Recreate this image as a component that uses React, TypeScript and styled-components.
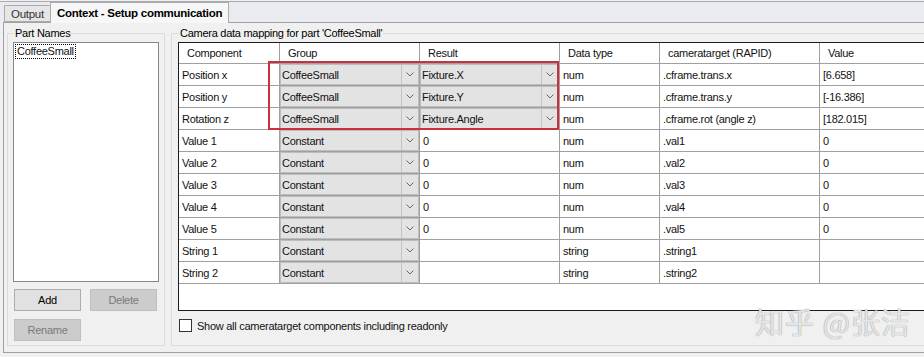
import React from "react";
import styled, { createGlobalStyle } from "styled-components";

const GlobalStyle = createGlobalStyle`
  html, body {
    margin: 0;
    padding: 0;
    background: #f0f0f0;
  }
  body {
    font-family: "Liberation Sans", Arial, sans-serif;
    font-size: 11px;
    letter-spacing: -0.27px;
    color: #111;
  }
`;

const Window = styled.div`
  position: relative;
  width: 924px;
  height: 357px;
  overflow: hidden;
  padding-top: 1px;
  box-sizing: border-box;
  display: flex;
  flex-direction: column;
`;

const TabStrip = styled.div`
  height: 20px;
  border-top: 1px solid #a8aab0;
  background: #e9ebf1;
  display: flex;
  align-items: flex-end;
  padding-left: 4px;
`;

const Tab = styled.div<{ $active?: boolean }>`
  position: relative;
  z-index: ${(p) => (p.$active ? 1 : 0)};
  box-sizing: border-box;
  height: ${(p) => (p.$active ? "21px" : "17px")};
  margin-bottom: ${(p) => (p.$active ? "-1px" : "0")};
  margin-left: ${(p) => (p.$active ? "-1px" : "0")};
  padding: 0 6px;
  display: flex;
  align-items: center;
  border: 1px solid #acacac;
  border-bottom: ${(p) => (p.$active ? "none" : "1px solid #acacac")};
  background: ${(p) => (p.$active ? "#f7f7f7" : "#e6e6e6")};
  font-weight: ${(p) => (p.$active ? "bold" : "normal")};
  font-size: 11.5px;
  color: ${(p) => (p.$active ? "#000" : "#333")};
`;

const Panel = styled.div`
  margin-left: 3px;
  height: 331px;
  box-sizing: border-box;
  border: 1px solid #a0a0a0;
  border-right: none;
  padding: 3px 0 6px 3px;
  display: flex;
  gap: 6px;
  align-items: stretch;
`;

const GroupBox = styled.fieldset<{ $width: number; $pad: number }>`
  flex: none;
  width: ${(p) => p.$width}px;
  box-sizing: border-box;
  margin: 0;
  padding: 0 ${(p) => p.$pad}px;
  border: 1px solid #dcdcdc;
  min-width: 0;
  display: flex;
  flex-direction: column;
`;

const Legend = styled.legend`
  padding: 0 1px;
  margin-left: 1px;
  line-height: 14px;
  color: #000;
`;

const ListBox = styled.div`
  margin-top: 2px;
  height: 240px;
  box-sizing: border-box;
  background: #fff;
  border: 1px solid #828790;
  padding: 1px;
`;

const ListItem = styled.div`
  display: inline-block;
  border: 1px dotted #000;
  padding: 0 1px;
  line-height: 13px;
`;

const ButtonRow = styled.div<{ $top: number }>`
  display: flex;
  gap: 9px;
  margin-top: ${(p) => p.$top}px;
  padding-left: 1px;
`;

const Button = styled.div<{ $disabled?: boolean }>`
  box-sizing: border-box;
  width: 67px;
  height: 22px;
  display: flex;
  align-items: center;
  justify-content: center;
  background: ${(p) => (p.$disabled ? "#cccccc" : "#e1e1e1")};
  border: 1px solid ${(p) => (p.$disabled ? "#bfbfbf" : "#adadad")};
  color: ${(p) => (p.$disabled ? "#7a7a7a" : "#000")};
`;

const Grid = styled.div`
  position: relative;
  margin-top: 2px;
  height: 269px;
  box-sizing: border-box;
  border: 1px solid #1c1c1c;
  background: #fff;
  overflow: hidden;
`;

const Row = styled.div<{ $header?: boolean }>`
  display: grid;
  grid-template-columns: 101px 140px 140px 100px 160px 160px;
  height: ${(p) => (p.$header ? "21px" : "22px")};
  box-sizing: border-box;
  border-bottom: 1px solid #a0a0a0;
`;

const Cell = styled.div<{ $header?: boolean }>`
  box-sizing: border-box;
  border-right: 1px solid #a0a0a0;
  padding-left: ${(p) => (p.$header ? "8px" : "3px")};
  display: flex;
  align-items: center;
  white-space: nowrap;
  overflow: hidden;
`;

const ComboCell = styled.div`
  box-sizing: border-box;
  border-right: 1px solid #a0a0a0;
  display: flex;
  align-items: stretch;
`;

const Combo = styled.div`
  flex: 1;
  display: flex;
  align-items: stretch;
  background: #e3e3e3;
  border: 1px solid #bdbdbd;
`;

const ComboText = styled.div`
  flex: 1;
  display: flex;
  align-items: center;
  padding-left: 1px;
  white-space: nowrap;
`;

const ComboArrow = styled.div`
  width: 16px;
  border-left: 1px solid #c4c4c4;
  display: flex;
  align-items: center;
  justify-content: center;
`;

const Highlight = styled.div`
  position: absolute;
  left: 89px;
  top: 18px;
  width: 291px;
  height: 69px;
  box-sizing: border-box;
  border: 2px solid #c9313c;
  pointer-events: none;
`;

const CheckRow = styled.div`
  margin-top: 8px;
  padding-left: 1px;
  display: flex;
  align-items: center;
  gap: 5px;
`;

const CheckBox = styled.div`
  width: 13px;
  height: 13px;
  box-sizing: border-box;
  border: 1px solid #333;
  background: #fff;
`;

const Watermark = styled.div`
  position: absolute;
  left: 755px;
  top: 300px;
  font-family: "Noto Sans CJK SC", sans-serif;
  font-size: 29px;
  letter-spacing: 1px;
  color: rgba(250, 250, 252, 0.85);
  text-shadow: 0 0 1px rgba(90, 90, 90, 0.9);
  white-space: nowrap;
`;

type RowData = {
  comp: string;
  group: string;
  result: string;
  resultCombo: boolean;
  dtype: string;
  target: string;
  value: string;
};

const rows: RowData[] = [
  { comp: "Position x", group: "CoffeeSmall", result: "Fixture.X", resultCombo: true, dtype: "num", target: ".cframe.trans.x", value: "[6.658]" },
  { comp: "Position y", group: "CoffeeSmall", result: "Fixture.Y", resultCombo: true, dtype: "num", target: ".cframe.trans.y", value: "[-16.386]" },
  { comp: "Rotation z", group: "CoffeeSmall", result: "Fixture.Angle", resultCombo: true, dtype: "num", target: ".cframe.rot (angle z)", value: "[182.015]" },
  { comp: "Value 1", group: "Constant", result: "0", resultCombo: false, dtype: "num", target: ".val1", value: "0" },
  { comp: "Value 2", group: "Constant", result: "0", resultCombo: false, dtype: "num", target: ".val2", value: "0" },
  { comp: "Value 3", group: "Constant", result: "0", resultCombo: false, dtype: "num", target: ".val3", value: "0" },
  { comp: "Value 4", group: "Constant", result: "0", resultCombo: false, dtype: "num", target: ".val4", value: "0" },
  { comp: "Value 5", group: "Constant", result: "0", resultCombo: false, dtype: "num", target: ".val5", value: "0" },
  { comp: "String 1", group: "Constant", result: "", resultCombo: false, dtype: "string", target: ".string1", value: "" },
  { comp: "String 2", group: "Constant", result: "", resultCombo: false, dtype: "string", target: ".string2", value: "" },
];

const Chevron = () => (
  <svg width="8" height="5" viewBox="0 0 8 5">
    <polyline points="0.5,0.5 4,4 7.5,0.5" fill="none" stroke="#6a6a6a" strokeWidth="1" />
  </svg>
);

const ComboBox: React.FC<{ text: string }> = ({ text }) => (
  <ComboCell>
    <Combo>
      <ComboText>{text}</ComboText>
      <ComboArrow>
        <Chevron />
      </ComboArrow>
    </Combo>
  </ComboCell>
);

const App: React.FC = () => {
  return (
    <Window>
      <GlobalStyle />
      <TabStrip>
        <Tab>Output</Tab>
        <Tab $active>Context - Setup communication</Tab>
      </TabStrip>
      <Panel>
        <GroupBox $width={158} $pad={5}>
          <Legend>Part Names</Legend>
          <ListBox>
            <ListItem>CoffeeSmall</ListItem>
          </ListBox>
          <ButtonRow $top={7}>
            <Button>Add</Button>
            <Button $disabled>Delete</Button>
          </ButtonRow>
          <ButtonRow $top={8}>
            <Button $disabled>Rename</Button>
          </ButtonRow>
        </GroupBox>
        <GroupBox $width={820} $pad={6}>
          <Legend>Camera data mapping for part 'CoffeeSmall'</Legend>
          <Grid>
            <Row $header>
              <Cell $header>Component</Cell>
              <Cell $header>Group</Cell>
              <Cell $header>Result</Cell>
              <Cell $header>Data type</Cell>
              <Cell $header>cameratarget (RAPID)</Cell>
              <Cell $header>Value</Cell>
            </Row>
            {rows.map((r) => (
              <Row key={r.comp}>
                <Cell>{r.comp}</Cell>
                <ComboBox text={r.group} />
                {r.resultCombo ? <ComboBox text={r.result} /> : <Cell>{r.result}</Cell>}
                <Cell>{r.dtype}</Cell>
                <Cell>{r.target}</Cell>
                <Cell>{r.value}</Cell>
              </Row>
            ))}
            <Highlight />
          </Grid>
          <CheckRow>
            <CheckBox />
            <span>Show all cameratarget components including readonly</span>
          </CheckRow>
        </GroupBox>
      </Panel>
      <Watermark>知乎 @张洁</Watermark>
    </Window>
  );
};

export default App;
